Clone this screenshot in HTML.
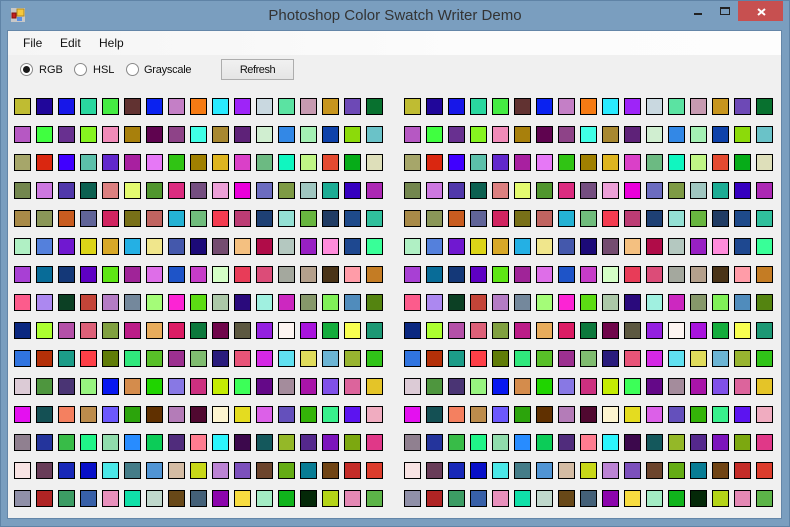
<!DOCTYPE html>
<html><head><meta charset="utf-8"><title>Photoshop Color Swatch Writer Demo</title>
<style>
html,body{margin:0;padding:0;background:#7a9ebf;width:790px;height:527px;overflow:hidden;font-family:"Liberation Sans",sans-serif}
#win{position:absolute;left:0;top:0;width:788px;height:525px;border:1px solid #5f83a6;background:#7a9ebf}
#client{position:absolute;left:8px;top:31px;width:773px;height:487px;background:#f0f0f0;box-shadow:0 0 0 1px #6486a8}
#menu{position:absolute;left:8px;top:31px;width:773px;height:24px;background:linear-gradient(90deg,#f5f5f5,#fcfcfc 60%,#fdfdfd)}
.t{position:absolute;white-space:nowrap;font-size:12px;line-height:14px;color:#111}
.l{font-size:11px}
.r{position:absolute;box-sizing:border-box;width:13px;height:13px;top:63px;border-radius:50%;border:1px solid #8a8a8a;background:#fff}
#dot{position:absolute;left:23px;top:66px;width:7px;height:7px;border-radius:50%;background:#1a1a1a}
#btn{position:absolute;left:221px;top:59px;width:71px;height:19px;border:1px solid #adadad;background:linear-gradient(#f1f1f1,#e5e5e5);font-size:11px;letter-spacing:-.45px;line-height:20px;text-align:center;color:#111}
#title{position:absolute;left:0;top:7px;width:790px;text-align:center;font-size:15px;line-height:18px;color:#333}
#close{position:absolute;left:738px;top:1px;width:45px;height:20px;background:#c75050}
svg{position:absolute;left:0;top:0}
#sw rect{width:16px;height:16px;y:.5px;stroke:#000;stroke-width:1;shape-rendering:crispEdges}
</style></head><body>
<div id="win"></div>
<div id="close"></div>
<div id="client"></div>
<div id="menu"></div>
<div id="title">Photoshop Color Swatch Writer Demo</div>
<div class="t" style="left:23px;top:36px">File</div>
<div class="t" style="left:60px;top:36px">Edit</div>
<div class="t" style="left:99px;top:36px">Help</div>
<div class="r" style="left:20px"></div><div id="dot"></div>
<div class="t l" style="left:39px;top:63px">RGB</div>
<div class="r" style="left:74px"></div>
<div class="t l" style="left:93px;top:63px">HSL</div>
<div class="r" style="left:126px"></div>
<div class="t l" style="left:144px;top:63px;letter-spacing:-.25px">Grayscale</div>
<div id="btn">Refresh</div>
<svg width="790" height="527" viewBox="0 0 790 527">
<g shape-rendering="crispEdges">
<rect x="11" y="8" width="14" height="14" fill="#c8c8c8"/>
<rect x="17" y="9" width="7" height="7" fill="#f6c83c" stroke="#b08a20" stroke-width="1"/>
<rect x="12" y="13" width="4" height="5" fill="#c62020" stroke="#801010" stroke-width="1"/>
<rect x="17" y="17" width="5" height="4" fill="#5c90e0"/>
<rect x="694" y="13" width="8" height="2" fill="#222"/>
<rect x="720.5" y="7.5" width="9" height="7" fill="none" stroke="#222"/>
<rect x="720" y="7" width="10" height="2" fill="#222"/>
</g>
<path d="M758 9 L765 15 M765 9 L758 15" stroke="#fff" stroke-width="2" fill="none"/>
<g id="sw">
<g transform="translate(0,98)"><rect x="14.5" fill="#bfbc32"/><rect x="36.5" fill="#20069a"/><rect x="58.5" fill="#1717e8"/><rect x="80.5" fill="#2ad79f"/><rect x="102.5" fill="#45ec43"/><rect x="124.5" fill="#613231"/><rect x="146.5" fill="#0a22f0"/><rect x="168.5" fill="#c47fc6"/><rect x="190.5" fill="#f67b14"/><rect x="212.5" fill="#2aeaff"/><rect x="234.5" fill="#9e24f8"/><rect x="256.5" fill="#c9d8e0"/><rect x="278.5" fill="#5be3a2"/><rect x="300.5" fill="#c79ab1"/><rect x="322.5" fill="#c7951e"/><rect x="344.5" fill="#6d49b6"/><rect x="366.5" fill="#08712f"/></g>
<g transform="translate(0,126)"><rect x="14.5" fill="#b658c3"/><rect x="36.5" fill="#40ff40"/><rect x="58.5" fill="#683090"/><rect x="80.5" fill="#86f420"/><rect x="102.5" fill="#f08bb8"/><rect x="124.5" fill="#a8800c"/><rect x="146.5" fill="#5f034f"/><rect x="168.5" fill="#8e4388"/><rect x="190.5" fill="#40ffe6"/><rect x="212.5" fill="#a88830"/><rect x="234.5" fill="#5e2278"/><rect x="256.5" fill="#d0eed0"/><rect x="278.5" fill="#3388e6"/><rect x="300.5" fill="#a4f0b4"/><rect x="322.5" fill="#0f42aa"/><rect x="344.5" fill="#8cda0a"/><rect x="366.5" fill="#6ac2c8"/></g>
<g transform="translate(0,154)"><rect x="14.5" fill="#a6a66a"/><rect x="36.5" fill="#da2710"/><rect x="58.5" fill="#4000ff"/><rect x="80.5" fill="#5cc0aa"/><rect x="102.5" fill="#6128cc"/><rect x="124.5" fill="#a820a0"/><rect x="146.5" fill="#e678f6"/><rect x="168.5" fill="#30c414"/><rect x="190.5" fill="#a08000"/><rect x="212.5" fill="#deb520"/><rect x="234.5" fill="#da40c8"/><rect x="256.5" fill="#6cba82"/><rect x="278.5" fill="#10f6c0"/><rect x="300.5" fill="#c0f686"/><rect x="322.5" fill="#e44a30"/><rect x="344.5" fill="#06ac18"/><rect x="366.5" fill="#dedfba"/></g>
<g transform="translate(0,182)"><rect x="14.5" fill="#73864e"/><rect x="36.5" fill="#cd78e0"/><rect x="58.5" fill="#5038aa"/><rect x="80.5" fill="#0c6050"/><rect x="102.5" fill="#dc8080"/><rect x="124.5" fill="#e4fb70"/><rect x="146.5" fill="#50962e"/><rect x="168.5" fill="#dc2c80"/><rect x="190.5" fill="#744e80"/><rect x="212.5" fill="#eca0d8"/><rect x="234.5" fill="#ea00da"/><rect x="256.5" fill="#6c6cc0"/><rect x="278.5" fill="#7e9a44"/><rect x="300.5" fill="#a0c6c0"/><rect x="322.5" fill="#1cac94"/><rect x="344.5" fill="#3600c0"/><rect x="366.5" fill="#ac28b4"/></g>
<g transform="translate(0,210)"><rect x="14.5" fill="#a88a48"/><rect x="36.5" fill="#8a9658"/><rect x="58.5" fill="#c85c20"/><rect x="80.5" fill="#606498"/><rect x="102.5" fill="#d02460"/><rect x="124.5" fill="#787018"/><rect x="146.5" fill="#c06460"/><rect x="168.5" fill="#24b2d4"/><rect x="190.5" fill="#70bc7c"/><rect x="212.5" fill="#f43c50"/><rect x="234.5" fill="#bc3c74"/><rect x="256.5" fill="#1e4074"/><rect x="278.5" fill="#94e0d4"/><rect x="300.5" fill="#68b640"/><rect x="322.5" fill="#203c64"/><rect x="344.5" fill="#1e4a8a"/><rect x="366.5" fill="#30c09c"/></g>
<g transform="translate(0,238)"><rect x="14.5" fill="#b0f0c4"/><rect x="36.5" fill="#5480dc"/><rect x="58.5" fill="#7018d0"/><rect x="80.5" fill="#dcd418"/><rect x="102.5" fill="#d8a828"/><rect x="124.5" fill="#24b0e4"/><rect x="146.5" fill="#f0e68c"/><rect x="168.5" fill="#4458ac"/><rect x="190.5" fill="#1c0a78"/><rect x="212.5" fill="#744c70"/><rect x="234.5" fill="#f4c080"/><rect x="256.5" fill="#b00c48"/><rect x="278.5" fill="#b4c8c0"/><rect x="300.5" fill="#9820c4"/><rect x="322.5" fill="#ff8cdc"/><rect x="344.5" fill="#1e4890"/><rect x="366.5" fill="#38ff98"/></g>
<g transform="translate(0,266)"><rect x="14.5" fill="#a840d4"/><rect x="36.5" fill="#086c98"/><rect x="58.5" fill="#143878"/><rect x="80.5" fill="#5e00c4"/><rect x="102.5" fill="#5ee614"/><rect x="124.5" fill="#a02498"/><rect x="146.5" fill="#de6ee8"/><rect x="168.5" fill="#1e54c8"/><rect x="190.5" fill="#c63cc8"/><rect x="212.5" fill="#d4ffc6"/><rect x="234.5" fill="#e83c58"/><rect x="256.5" fill="#dc4c78"/><rect x="278.5" fill="#a4a89e"/><rect x="300.5" fill="#b4a08c"/><rect x="322.5" fill="#4a3418"/><rect x="344.5" fill="#ff9ca8"/><rect x="366.5" fill="#c47c24"/></g>
<g transform="translate(0,294)"><rect x="14.5" fill="#fc5c8c"/><rect x="36.5" fill="#ac88f0"/><rect x="58.5" fill="#0c4024"/><rect x="80.5" fill="#c44438"/><rect x="102.5" fill="#b47cc4"/><rect x="124.5" fill="#74889c"/><rect x="146.5" fill="#a4fc78"/><rect x="168.5" fill="#fc24d4"/><rect x="190.5" fill="#5cdc14"/><rect x="212.5" fill="#acc8a8"/><rect x="234.5" fill="#2a0a7c"/><rect x="256.5" fill="#a0f0e0"/><rect x="278.5" fill="#cc28c0"/><rect x="300.5" fill="#86986a"/><rect x="322.5" fill="#80f058"/><rect x="344.5" fill="#508cbc"/><rect x="366.5" fill="#548410"/></g>
<g transform="translate(0,322)"><rect x="14.5" fill="#0a2880"/><rect x="36.5" fill="#acff30"/><rect x="58.5" fill="#b450a8"/><rect x="80.5" fill="#dc6078"/><rect x="102.5" fill="#80a040"/><rect x="124.5" fill="#bc1c88"/><rect x="146.5" fill="#e8ac5c"/><rect x="168.5" fill="#dc1c64"/><rect x="190.5" fill="#0c783c"/><rect x="212.5" fill="#70074c"/><rect x="234.5" fill="#5c5840"/><rect x="256.5" fill="#9420e0"/><rect x="278.5" fill="#fcf4f0"/><rect x="300.5" fill="#a814dc"/><rect x="322.5" fill="#14ac3c"/><rect x="344.5" fill="#f8ff50"/><rect x="366.5" fill="#1c9874"/></g>
<g transform="translate(0,350)"><rect x="14.5" fill="#3074e0"/><rect x="36.5" fill="#b43008"/><rect x="58.5" fill="#1c9c88"/><rect x="80.5" fill="#ff4048"/><rect x="102.5" fill="#607c08"/><rect x="124.5" fill="#30e87c"/><rect x="146.5" fill="#58c028"/><rect x="168.5" fill="#9c3090"/><rect x="190.5" fill="#80bc70"/><rect x="212.5" fill="#2a1c7c"/><rect x="234.5" fill="#e85478"/><rect x="256.5" fill="#d428e4"/><rect x="278.5" fill="#60e0f0"/><rect x="300.5" fill="#e0dc5c"/><rect x="322.5" fill="#6cb4d4"/><rect x="344.5" fill="#98b430"/><rect x="366.5" fill="#30c418"/></g>
<g transform="translate(0,378)"><rect x="14.5" fill="#dccbd6"/><rect x="36.5" fill="#4e963e"/><rect x="58.5" fill="#4a3474"/><rect x="80.5" fill="#98f480"/><rect x="102.5" fill="#0818f0"/><rect x="124.5" fill="#d48c4c"/><rect x="146.5" fill="#20d400"/><rect x="168.5" fill="#8878e4"/><rect x="190.5" fill="#cc3080"/><rect x="212.5" fill="#c4ec04"/><rect x="234.5" fill="#3cff58"/><rect x="256.5" fill="#640888"/><rect x="278.5" fill="#a48c9c"/><rect x="300.5" fill="#a814a8"/><rect x="322.5" fill="#8050e8"/><rect x="344.5" fill="#dc649c"/><rect x="366.5" fill="#e4c428"/></g>
<g transform="translate(0,406)"><rect x="14.5" fill="#e410f0"/><rect x="36.5" fill="#145054"/><rect x="58.5" fill="#f48060"/><rect x="80.5" fill="#bc8c4c"/><rect x="102.5" fill="#6c58fc"/><rect x="124.5" fill="#2ca40c"/><rect x="146.5" fill="#603000"/><rect x="168.5" fill="#b47cb8"/><rect x="190.5" fill="#500830"/><rect x="212.5" fill="#fcf4d0"/><rect x="234.5" fill="#e4dc20"/><rect x="256.5" fill="#dc60e8"/><rect x="278.5" fill="#6450bc"/><rect x="300.5" fill="#34b408"/><rect x="322.5" fill="#38f08c"/><rect x="344.5" fill="#5c14f0"/><rect x="366.5" fill="#f0acc0"/></g>
<g transform="translate(0,434)"><rect x="14.5" fill="#908090"/><rect x="36.5" fill="#24349c"/><rect x="58.5" fill="#38bc48"/><rect x="80.5" fill="#20f488"/><rect x="102.5" fill="#90dcac"/><rect x="124.5" fill="#288cff"/><rect x="146.5" fill="#0ccc58"/><rect x="168.5" fill="#502c7c"/><rect x="190.5" fill="#ff7c90"/><rect x="212.5" fill="#2cf4fc"/><rect x="234.5" fill="#3c084c"/><rect x="256.5" fill="#14585c"/><rect x="278.5" fill="#94b828"/><rect x="300.5" fill="#54288c"/><rect x="322.5" fill="#7c14bc"/><rect x="344.5" fill="#7ca810"/><rect x="366.5" fill="#e03888"/></g>
<g transform="translate(0,462)"><rect x="14.5" fill="#f8e4e4"/><rect x="36.5" fill="#683c58"/><rect x="58.5" fill="#1828b8"/><rect x="80.5" fill="#0810c8"/><rect x="102.5" fill="#4ce8e8"/><rect x="124.5" fill="#447c88"/><rect x="146.5" fill="#5094d4"/><rect x="168.5" fill="#d4bca4"/><rect x="190.5" fill="#c8d818"/><rect x="212.5" fill="#bc84d4"/><rect x="234.5" fill="#7c50bc"/><rect x="256.5" fill="#6c442c"/><rect x="278.5" fill="#64ac14"/><rect x="300.5" fill="#087c94"/><rect x="322.5" fill="#704414"/><rect x="344.5" fill="#c42c28"/><rect x="366.5" fill="#dc3c2c"/></g>
<g transform="translate(0,490)"><rect x="14.5" fill="#9090a8"/><rect x="36.5" fill="#b02424"/><rect x="58.5" fill="#3c9c64"/><rect x="80.5" fill="#3860a8"/><rect x="102.5" fill="#e890bc"/><rect x="124.5" fill="#10e0a8"/><rect x="146.5" fill="#c0d8cc"/><rect x="168.5" fill="#684818"/><rect x="190.5" fill="#446078"/><rect x="212.5" fill="#8c04ac"/><rect x="234.5" fill="#f8dc40"/><rect x="256.5" fill="#a4ecc4"/><rect x="278.5" fill="#10b41c"/><rect x="300.5" fill="#042808"/><rect x="322.5" fill="#b4d418"/><rect x="344.5" fill="#e488b4"/><rect x="366.5" fill="#5cb448"/></g>
</g>
<use href="#sw" x="390" y="0"/>
</svg>
</body></html>
